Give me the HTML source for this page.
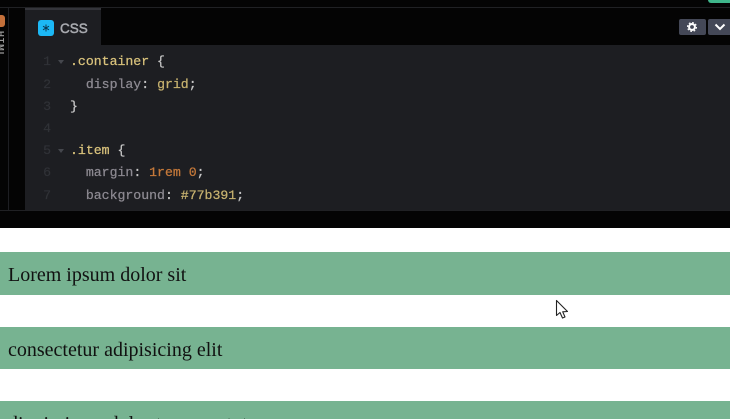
<!DOCTYPE html>
<html>
<head>
<meta charset="utf-8">
<style>
html,body{margin:0;padding:0;width:730px;height:419px;overflow:hidden;background:#fff}
.a{position:absolute}
#wrap{position:relative;width:730px;height:419px;overflow:hidden}
.code{font-family:"Liberation Mono",monospace;font-size:13.2px;line-height:22.2px;white-space:pre;color:#c8c8c8;filter:blur(.35px);-webkit-text-stroke:.25px currentColor}
.n{font-family:"Liberation Mono",monospace;font-size:13.2px;line-height:22.2px;color:#303237;filter:blur(.35px);text-align:right;width:16px;-webkit-text-stroke:.2px currentColor}
.g{background:#77b391;left:0;width:730px}
.t{font-family:"Liberation Serif",serif;font-size:20px;color:#111;left:8px;white-space:nowrap;line-height:22px;filter:blur(.25px)}
.s{color:#d9c27c}.p{color:#8d8a92}.v{color:#c7b26f}.o{color:#c5793a}
</style>
</head>
<body>
<div id="wrap">
<div class="a" style="left:0;top:0;width:730px;height:228px;background:#040404"></div>
<div class="a" style="left:0;top:7px;width:730px;height:1px;background:#202124"></div>
<div class="a" style="left:708px;top:0;width:22px;height:3px;background:#3fb68b;border-radius:0 0 0 3px"></div>

<div class="a" style="left:-6px;top:15px;width:11px;height:12px;background:#c4703a;border-radius:3px"></div>
<div class="a" style="left:-4px;top:31px;font:bold 8px 'Liberation Sans',sans-serif;color:#999;writing-mode:vertical-rl;letter-spacing:1.2px;line-height:8px;filter:blur(.3px)">HTML</div>
<div class="a" style="left:8px;top:8px;width:1px;height:203px;background:#1d1e22"></div>

<div class="a" style="left:25px;top:8px;width:76px;height:37px;background:#1d1e22"></div>
<div class="a" style="left:25px;top:8px;width:76px;height:2px;background:#34353b"></div>
<div class="a" style="left:25px;top:45px;width:705px;height:165px;background:#1d1e22"></div>
<div class="a" style="left:0;top:210px;width:730px;height:1px;background:#202124"></div>

<div class="a" style="left:38px;top:20px;width:16px;height:16px;border-radius:3px;background:#1cb8f5"></div>
<svg class="a" style="left:38px;top:20px" width="16" height="16" viewBox="0 0 16 16"><path d="M8 4.500V11.500M5 6.200L11 9.800M11 6.200L5 9.800" stroke="#0b3a55" stroke-width="1" fill="none"/></svg>
<div class="a" style="left:60px;top:20px;font:13.5px/18px 'Liberation Sans',sans-serif;-webkit-text-stroke:.5px #a9abb0;color:#a9abb0;filter:blur(.25px)">CSS</div>

<div class="a" style="left:679px;top:19px;width:27px;height:16px;border-radius:2px;background:#444857"></div>
<svg class="a" style="left:686px;top:21px" width="12" height="12" viewBox="0 0 14 14"><circle cx="7" cy="7" r="3.400" fill="none" stroke="#fff" stroke-width="2.400"/><circle cx="7" cy="7" r="5.200" fill="none" stroke="#fff" stroke-width="1.400" stroke-dasharray="2 2.080"/></svg>
<div class="a" style="left:708px;top:19px;width:24px;height:16px;border-radius:2px;background:#444857"></div>
<svg class="a" style="left:714px;top:22px" width="12" height="10" viewBox="0 0 12 10"><path d="M1.500 2.500 L6 7 L10.500 2.500" fill="none" stroke="#fff" stroke-width="2"/></svg>

<div class="a n" style="left:35px;top:51.4px">1<br>2<br>3<br>4<br>5<br>6<br>7</div>
<div class="a" style="left:58px;top:60px;width:0;height:0;border-left:3px solid transparent;border-right:3px solid transparent;border-top:4px solid #45474d"></div>
<div class="a" style="left:58px;top:149px;width:0;height:0;border-left:3px solid transparent;border-right:3px solid transparent;border-top:4px solid #45474d"></div>
<div class="a code" style="left:70px;top:51.4px"><span class="s">.container</span> {
  <span class="p">display</span>: <span class="v">grid</span>;
}

<span class="s">.item</span> {
  <span class="p">margin</span>: <span class="o">1rem 0</span>;
  <span class="p">background</span>: <span class="v">#77b391</span>;</div>

<div class="a g" style="top:252.3px;height:42.5px"></div>
<div class="a g" style="top:326.700px;height:42.600px"></div>
<div class="a g" style="top:401.300px;height:18px"></div>
<div class="a t" style="top:264px">Lorem ipsum dolor sit</div>
<div class="a t" style="top:339px">consectetur adipisicing elit</div>
<div class="a t" style="top:413px">dignissimos dolor tempore totam</div>

<svg class="a" style="left:555px;top:299px" width="16" height="22" viewBox="0 0 16 22"><path d="M1.500 1.500 L1.500 16.500 L5 13.500 L7.500 19 L10 18 L7.700 12.800 L12.500 12.500 Z" fill="#fff" stroke="#222" stroke-width="1.100" stroke-linejoin="round"/></svg>
</div>
</body>
</html>
